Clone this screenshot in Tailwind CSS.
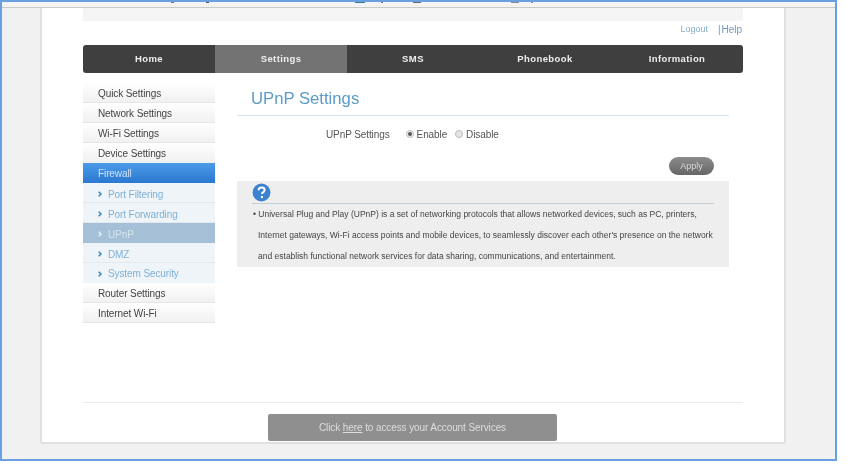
<!DOCTYPE html>
<html lang="en">
<head>
    <meta charset="UTF-8">
    <title>UPnP Settings</title>
    <script src="https://cdn.jsdelivr.net/npm/@tailwindcss/browser@4"></script>
</head>
<body class="bg-white overflow-hidden font-['Liberation_Sans',Arial,sans-serif]">
<div class="w-[847px] h-[470px] blur-[0.4px]">
    <div class="w-[837px] h-[461px] border-2 border-[#6a9fe0] bg-[#f1f1f1] flex flex-col">
        <!-- cut off toolbar at the top of the capture -->
        <div class="h-[6px] bg-[#f4f4f4] border-b border-[#c9c9c9] flex items-start shrink-0">
            <span class="ml-[169px] w-[3px] h-[1px] bg-[#777]"></span>
            <span class="ml-[32px] w-[3px] h-[1px] bg-[#555]"></span>
            <span class="ml-[146px] w-[10px] h-[1px] bg-[#2f7f8f]"></span>
            <span class="ml-[16px] w-[2px] h-[1px] bg-[#777]"></span>
            <span class="ml-[30px] w-[8px] h-[1px] bg-[#666]"></span>
            <span class="ml-[90px] w-[8px] h-[1px] bg-[#888]"></span>
            <span class="ml-[12px] w-[2px] h-[1px] bg-[#888]"></span>
        </div>

        <div class="ml-[38px] w-[746px] h-[436px] bg-white border-x-2 border-b-2 border-[#e0e0e0] rounded-b-[3px] px-[41px] flex flex-col">
            <div class="h-[13px] bg-[#f5f5f5] shrink-0"></div>
            <div class="h-[24px] flex justify-end items-start pt-[1px] gap-[10px] text-[9px] text-[#86abc9] shrink-0 pr-[1px]">
                <span class="mt-[1px]">Logout</span>
                <span class="text-[10px] text-[#6f9bc0]">|&#8202;Help</span>
            </div>

            <!-- main nav -->
            <div class="h-[28px] grid grid-cols-5 rounded-[3px] overflow-hidden bg-[#3f3f3f] text-[9.5px] font-bold tracking-[0.4px] text-[#eeeeee] shrink-0">
                <div class="flex items-center justify-center">Home</div>
                <div class="flex items-center justify-center bg-[#737373]">Settings</div>
                <div class="flex items-center justify-center">SMS</div>
                <div class="flex items-center justify-center">Phonebook</div>
                <div class="flex items-center justify-center">Information</div>
            </div>

            <div class="flex mt-[10px] h-[320px] shrink-0">
                <!-- side menu -->
                <div class="w-[132px] shrink-0 text-[10px] tracking-[-0.1px] text-[#444]">
                    <div class="h-[20px] pl-[15px] pt-[1px] flex items-center bg-gradient-to-b from-white to-[#f0f0f0] shadow-[inset_0_-1px_0_#e6e6e6]">Quick Settings</div>
                    <div class="h-[20px] pl-[15px] pt-[1px] flex items-center bg-gradient-to-b from-white to-[#f0f0f0] shadow-[inset_0_-1px_0_#e6e6e6]">Network Settings</div>
                    <div class="h-[20px] pl-[15px] pt-[1px] flex items-center bg-gradient-to-b from-white to-[#f0f0f0] shadow-[inset_0_-1px_0_#e6e6e6]">Wi-Fi Settings</div>
                    <div class="h-[20px] pl-[15px] pt-[1px] flex items-center bg-gradient-to-b from-white to-[#f0f0f0]">Device Settings</div>
                    <div class="h-[20px] pl-[15px] pt-[1px] flex items-center bg-gradient-to-b from-[#4b9be8] to-[#2a78d0] text-[#cfe2f6]">Firewall</div>
                    <div class="h-[20px] pl-[15px] pt-[2px] flex items-center gap-[6px] bg-[#eef4f8] shadow-[inset_0_-1px_0_#e2e9ee] text-[#7fb0d6]">
                        <svg class="w-[4px] h-[6px]" viewBox="0 0 4 6"><path d="M.7.7 3 3 .7 5.3" fill="none" stroke="#2f7fb8" stroke-width="1.4"/></svg>Port Filtering
                    </div>
                    <div class="h-[20px] pl-[15px] pt-[2px] flex items-center gap-[6px] bg-[#eef4f8] shadow-[inset_0_-1px_0_#e2e9ee] text-[#7fb0d6]">
                        <svg class="w-[4px] h-[6px]" viewBox="0 0 4 6"><path d="M.7.7 3 3 .7 5.3" fill="none" stroke="#2f7fb8" stroke-width="1.4"/></svg>Port Forwarding
                    </div>
                    <div class="h-[20px] pl-[15px] pt-[2px] flex items-center gap-[6px] bg-[#a5c0d6] text-[#d6e4ef]">
                        <svg class="w-[4px] h-[6px]" viewBox="0 0 4 6"><path d="M.7.7 3 3 .7 5.3" fill="none" stroke="#e6f0f7" stroke-width="1.4"/></svg>UPnP
                    </div>
                    <div class="h-[20px] pl-[15px] pt-[2px] flex items-center gap-[6px] bg-[#eef4f8] shadow-[inset_0_-1px_0_#e2e9ee] text-[#7fb0d6]">
                        <svg class="w-[4px] h-[6px]" viewBox="0 0 4 6"><path d="M.7.7 3 3 .7 5.3" fill="none" stroke="#2f7fb8" stroke-width="1.4"/></svg>DMZ
                    </div>
                    <div class="h-[20px] pl-[15px] pt-[1px] flex items-center gap-[6px] bg-[#eef4f8] text-[#7fb0d6]">
                        <svg class="w-[4px] h-[6px]" viewBox="0 0 4 6"><path d="M.7.7 3 3 .7 5.3" fill="none" stroke="#2f7fb8" stroke-width="1.4"/></svg>System Security
                    </div>
                    <div class="h-[20px] pl-[15px] pt-[1px] flex items-center bg-gradient-to-b from-white to-[#f0f0f0] shadow-[inset_0_-1px_0_#e6e6e6]">Router Settings</div>
                    <div class="h-[20px] pl-[15px] pt-[1px] flex items-center bg-gradient-to-b from-white to-[#f0f0f0] shadow-[inset_0_-1px_0_#e6e6e6]">Internet Wi-Fi</div>
                </div>

                <!-- content -->
                <div class="ml-[22px] w-[492px] flex flex-col">
                    <div class="h-[33px] pl-[14px] flex items-center text-[16.7px] text-[#5b9bc8] border-b border-[#d5e3ee] shrink-0">UPnP Settings</div>
                    <div class="h-[35px] pt-[1px] flex items-center text-[10px] tracking-[-0.1px] text-[#555] shrink-0">
                        <span class="ml-[89px]">UPnP Settings</span>
                        <span class="ml-[16px] w-[8px] h-[8px] rounded-full border border-[#bbb] bg-[#f2f2f2] flex items-center justify-center"><span class="w-[4px] h-[4px] rounded-full bg-[#555]"></span></span>
                        <span class="ml-[3px]">Enable</span>
                        <span class="ml-[8px] w-[8px] h-[8px] rounded-full border border-[#bbb] bg-[#e6e6e6]"></span>
                        <span class="ml-[3px]">Disable</span>
                    </div>
                    <div class="h-[30px] flex items-start justify-end pr-[15px] pt-[6px] shrink-0">
                        <div class="w-[45px] h-[18px] rounded-full bg-gradient-to-b from-[#8c8c8c] to-[#666] text-[#d8d8d8] text-[9px] pt-[1px] flex items-center justify-center">Apply</div>
                    </div>
                    <div class="h-[86px] bg-[#eeeeee] px-[15px] shrink-0">
                        <div class="h-[23px] border-b border-[#c3cdd6] flex items-center">
                            <svg class="mt-[1px]" width="19" height="19" viewBox="0 0 19 19">
                                <circle cx="9.5" cy="9.5" r="9" fill="#3b83d1"/>
                                <path d="M6.6 7.2c0-1.7 1.3-2.7 3-2.7s3 1 3 2.4c0 1.2-.7 1.8-1.6 2.4-.7.5-1 .8-1 1.6" fill="none" stroke="#fff" stroke-width="2"/>
                                <circle cx="9.9" cy="14" r="1.2" fill="#fff"/>
                            </svg>
                        </div>
                        <div class="text-[8.5px] leading-[21px] text-[#444] whitespace-nowrap ml-[1px]">
                            <div>•&nbsp;Universal Plug and Play (UPnP) is a set of networking protocols that allows networked devices, such as PC, printers,</div>
                            <div class="pl-[5px]">Internet gateways, Wi-Fi access points and mobile devices, to seamlessly discover each other's presence on the network</div>
                            <div class="pl-[5px]">and establish functional network services for data sharing, communications, and entertainment.</div>
                        </div>
                    </div>
                </div>
            </div>

            <!-- footer -->
            <div class="mt-[-1px] border-t border-[#ececec] h-[39px] flex justify-center pt-[11px] shrink-0">
                <div class="ml-[-1px] w-[289px] h-[27px] bg-[#8f8f8f] rounded-[2px] flex items-center justify-center text-[10px] tracking-[-0.1px] text-[#dddddd]">
                    <span>Click <span class="underline">here</span> to access your Account Services</span>
                </div>
            </div>
        </div>
    </div>
</div>
</body>
</html>
